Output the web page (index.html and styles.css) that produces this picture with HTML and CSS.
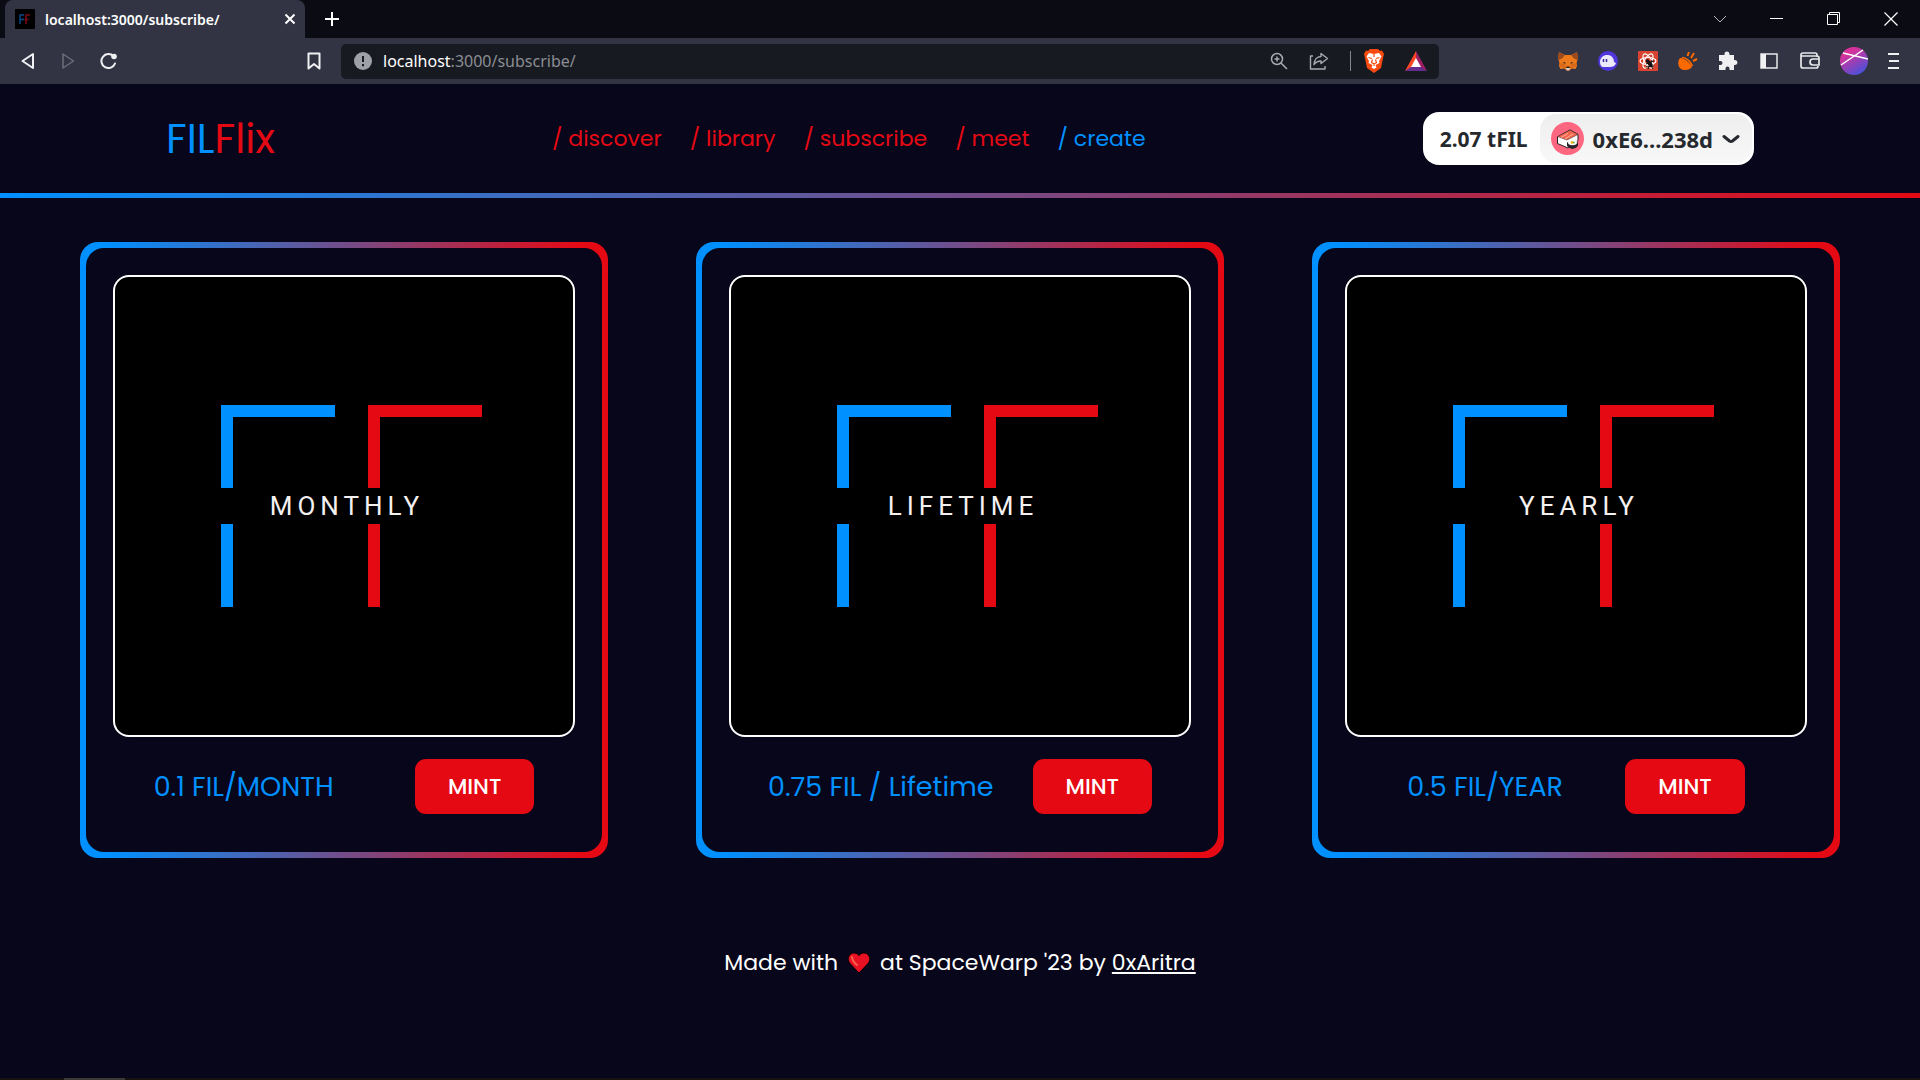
FILE: index.html
```html
<!DOCTYPE html>
<html lang="en">
<head>
  <meta charset="UTF-8">
  <meta name="viewport" content="width=device-width, initial-scale=1.0">
  <title>localhost:3000/subscribe/</title>
  <link rel="stylesheet" href="styles.css">
</head>
<body>
  <!-- Browser tabs -->
  <div class="tabbar">
    <div class="tab">
      <svg class="favicon" width="20" height="20" viewBox="0 0 20 20"><rect width="20" height="20" fill="#000"/><path d="M5 15V6h4M5 10.500h4" stroke="#06498a" stroke-width="1.500" fill="none"/><path d="M11 15V6h4M9.500 10.500h4" stroke="#7d0a14" stroke-width="1.500" fill="none"/></svg>
      <span class="tab-title">localhost:3000/subscribe/</span>
      <button class="icon-btn" aria-label="Close tab"><svg width="12" height="12" viewBox="0 0 12 12"><path d="M1.500 1.500l9 9M10.500 1.500l-9 9" stroke="#fff" stroke-width="2"/></svg></button>
    </div>
    <button class="icon-btn new-tab" aria-label="New tab"><svg width="16" height="16" viewBox="0 0 16 16"><path d="M8 1v14M1 8h14" stroke="#fff" stroke-width="2"/></svg></button>
    <div class="window-controls">
      <button class="icon-btn" aria-label="Search tabs"><svg width="14" height="14" viewBox="0 0 14 14"><path d="M1 4l6 6 6-6" stroke="#bbb" fill="none"/></svg></button>
      <button class="icon-btn" aria-label="Minimize"><svg width="14" height="14" viewBox="0 0 14 14"><path d="M0 6.500h13" stroke="#fff"/></svg></button>
      <button class="icon-btn" aria-label="Restore"><svg width="14" height="14" viewBox="0 0 14 14"><path d="M.5 2.500h10v10H.5zM2.500 2.500v-2h10v10h-2" stroke="#fff" fill="none"/></svg></button>
      <button class="icon-btn" aria-label="Close"><svg width="14" height="14" viewBox="0 0 14 14"><path d="M.5.5l13 13M13.500.5l-13 13" stroke="#fff" stroke-width="1.200"/></svg></button>
    </div>
  </div>

  <!-- Browser toolbar -->
  <div class="toolbar">
    <div class="nav-buttons">
      <button class="icon-btn" aria-label="Back"><svg width="16" height="18" viewBox="0 0 16 18"><path d="M13 2v14L2.500 9z" stroke="#f0f0f2" stroke-width="2" stroke-linejoin="round" fill="none"/></svg></button>
      <button class="icon-btn" aria-label="Forward"><svg width="16" height="18" viewBox="0 0 16 18"><path d="M3 2v14l10.500-7z" stroke="#6c6e79" stroke-width="1.500" stroke-linejoin="round" fill="none"/></svg></button>
      <button class="icon-btn" aria-label="Reload"><svg width="18" height="18" viewBox="0 0 18 18"><path d="M13.500 4.200A7 7 0 1 0 15 11.500" stroke="#f0f0f2" stroke-width="2" stroke-linecap="round" fill="none"/><circle cx="14" cy="4.500" r="2.800" fill="#f0f0f2"/></svg></button>
    </div>
    <button class="icon-btn" aria-label="Bookmark"><svg width="14" height="18" viewBox="0 0 14 18"><path d="M1.500 1.500h11v15L7 12l-5.500 4.500z" stroke="#f0f0f2" stroke-width="2" stroke-linejoin="round" fill="none"/></svg></button>
    <div class="address">
      <svg width="18" height="18" viewBox="0 0 18 18"><circle cx="9" cy="9" r="9" fill="#9fa1a9"/><path d="M9 4v6M9 12v2.200" stroke="#171a21" stroke-width="2"/></svg>
      <div class="url"><span class="host">localhost</span>:3000/subscribe/</div>
      <button class="icon-btn" aria-label="Zoom"><svg width="18" height="18" viewBox="0 0 18 18"><circle cx="7" cy="7" r="5.500" stroke="#aaabae" stroke-width="1.500" fill="none"/><path d="M11 11l6 6M7 4.500v5M4.500 7h5" stroke="#aaabae" stroke-width="1.500"/></svg></button>
      <button class="icon-btn" aria-label="Share"><svg width="20" height="18" viewBox="0 0 20 18"><path d="M4 4H1.500v13H16v-3M12 1.500l6.500 5-6.500 5V9c-3 0-5 1-7 3.500.3-4.500 3-8 7-8z" stroke="#aaabae" stroke-width="1.400" stroke-linejoin="round" fill="none"/></svg></button>
      <span class="divider"></span>
      <button class="icon-btn" aria-label="Brave Shields"><svg width="20" height="24" viewBox="0 0 20 24"><path d="M6 0h8l2 2 2-.5L20 5l-1 4-2 10-7 5-7-5L1 9 0 5l2-3.500L4 2z" fill="#fb4a0d"/><path d="M5 4l5 1 5-1 2.500 3.500L15 12l.5 2-4 2 1 2.500L10 20l-2.500-1.500 1-2.500-4-2 .5-2-2.500-4.500z" fill="#fff"/><path d="M4.500 8.500L8 9.500M15.500 8.500L12 9.500M10 5v3M8.500 10.500l-1 3 2.500 1.500 2.500-1.500-1-3M10 15v2" stroke="#fb4a0d" stroke-width="1.200" fill="none"/></svg></button>
      <button class="icon-btn" aria-label="Brave Rewards"><svg width="22" height="20" viewBox="0 0 22 20"><path d="M11 0L0 20l11-6z" fill="#ff4724"/><path d="M11 0l11 20-11-6z" fill="#9e1f63"/><path d="M0 20h22l-6-4H6z" fill="#662d91"/><path d="M11 7l5 9H6z" fill="#fff"/></svg></button>
    </div>
    <div class="extensions">
      <button class="icon-btn" aria-label="MetaMask"><svg width="20" height="20" viewBox="0 0 20 20"><path d="M1 1l6 3h6l6-3 1 6-1.500 5 .5 3-1.500 3-4-.5-2 2h-3l-2-2-4 .5L1 15l.5-3L0 7z" fill="#ef7a1c"/><path d="M1 1l6 3-3 3.500L.5 9 0 7zM19 1l-6 3 3 3.500L19.500 9 20 7z" fill="#9a4a1b"/><path d="M1.500 12L7 13l1.500 3-1.500 1.500L1 15zM18.500 12L13 13l-1.500 3 1.500 1.500 6-2.500z" fill="#d96a1a"/><path d="M7.500 17h5l-1.500 2.500H9z" fill="#d5c6b8"/><path d="M4.500 11l3 .5-.5 1.500zM15.500 11l-3 .5.5 1.500zM8.500 15.500h3l.5 1.500H8z" fill="#2d2825"/></svg></button>
      <button class="icon-btn" aria-label="Phantom"><svg width="20" height="20" viewBox="0 0 20 20"><circle cx="10" cy="10" r="10" fill="#5036dc"/><path d="M2 10.500C2.500 6 6 3.500 10 4c4 .5 6 3.500 6 7l2 1c-1 3-3 4-7 4H6c-3 0-4-2-4-5.500z" fill="#ece9fb"/><path d="M5.500 8v3M8.500 8v3" stroke="#3a2b9a" stroke-width="1.500"/></svg></button>
      <button class="icon-btn" aria-label="React Developer Tools"><svg width="20" height="20" viewBox="0 0 20 20"><rect width="20" height="20" rx="1" fill="#d9432f"/><g fill="none" stroke="#fff" stroke-width="1.200"><ellipse cx="10" cy="10" rx="8" ry="3.500"/><ellipse cx="10" cy="10" rx="8" ry="3.500" transform="rotate(60 10 10)"/><ellipse cx="10" cy="10" rx="8" ry="3.500" transform="rotate(120 10 10)"/></g><ellipse cx="12" cy="13" rx="2" ry="3.500" transform="rotate(-35 12 13)" fill="#111"/><circle cx="9.500" cy="10" r="1.800" fill="#111"/><path d="M8 13l8-3M8 16l8-1M14 9l-4 9M11 11l4 7" stroke="#111"/></svg></button>
      <button class="icon-btn" aria-label="Station"><svg width="20" height="20" viewBox="0 0 20 20"><path d="M2 7C-1 11 0 17 4 18.500c4 1.500 8 0 10-2.500-1-3-7-9-12-9z" fill="#ff6a00"/><path d="M4 6.500c4 0 9 4 10.500 8.500" stroke="#ff6a00" stroke-width="1.500" fill="none"/><path d="M9.500 5l1.500-4M13 7l3-5M15 10l4-2" stroke="#ff6a00" stroke-width="2"/></svg></button>
      <button class="icon-btn" aria-label="Extensions"><svg width="20" height="20" viewBox="0 0 20 20"><path d="M1 4h5.500V3a2.500 2.500 0 0 1 5 0v1H16v5h1a2.500 2.500 0 0 1 0 5h-1v5h-4.500v-1.500a2 2 0 0 0-4 0V19H1v-5h1.500a2 2 0 0 0 0-4H1z" fill="#f0f0f2"/></svg></button>
      <button class="icon-btn" aria-label="Sidebar"><svg width="22" height="16" viewBox="-2 0 22 16"><path d="M1 1h16v14H1z" fill="none" stroke="#e8e8ea" stroke-width="1.500"/><path d="M1 1h5v14H1z" fill="#f0f0f2"/></svg></button>
      <button class="icon-btn" aria-label="Wallet"><svg width="20" height="18" viewBox="0 0 20 18"><path d="M17 5V3q0-2-2-2H3Q1 1 1 3v11q0 2 2 2h13q2 0 2-2M1 4h16q2 0 2 2v2M19 7h-6a3 3 0 0 0 0 6h6z" fill="none" stroke="#e8e8ea" stroke-width="1.700"/></svg></button>
      <button class="icon-btn" aria-label="Profile"><svg width="28" height="28" viewBox="0 0 28 28"><defs><linearGradient id="profile" x1="0.200" y1="0" x2="0.800" y2="1"><stop offset="0.200" stop-color="#d6329a"/><stop offset="1" stop-color="#3e54e0"/></linearGradient></defs><circle cx="14" cy="14" r="14" fill="url(#profile)"/><path d="M1 18L23 3M3 6l25 6" stroke="#fff" stroke-width="1.500"/></svg></button>
      <button class="icon-btn" aria-label="Menu"><svg width="12" height="18" viewBox="0 0 12 18"><path d="M0 2h11M1 9h10M0 16h11" stroke="#f0f0f2" stroke-width="2"/></svg></button>
    </div>
  </div>

  <header class="header">
    <a class="logo" href="#">FIL<span class="red">Flix</span></a>
    <nav class="menu">
      <a href="#">/ discover</a>
      <a href="#">/ library</a>
      <a href="#">/ subscribe</a>
      <a href="#">/ meet</a>
      <a class="blue" href="#">/ create</a>
    </nav>
    <div class="wallet">
      <span class="balance">2.07 tFIL</span>
      <button class="account">
        <svg width="33" height="33" viewBox="0 0 33 33"><circle cx="16.500" cy="16.500" r="16.500" fill="#ff6680"/><path d="M6.500 15L19 8l8 4.500v6L17 26 6.500 21.500z" fill="#fff" stroke="#222" stroke-linejoin="round"/><path d="M6.500 14.500L19 8l8 4.500L16 18z" fill="#f5664f" stroke="#222" stroke-width=".5"/><path d="M10 15.500l7-4M14 17l8-5" stroke="#ffb09c"/><path d="M16 20.500q5.500-4 11 0V24q-5.500 6-11 0z" fill="#25252b"/><ellipse cx="21.500" cy="20.500" rx="4.500" ry="2.800" fill="#fff"/><circle cx="21" cy="20.500" r="1.400" fill="#f2bb28"/><circle cx="22.800" cy="20.500" r="1" fill="#6fa83a"/></svg>
        <span>0xE6...238d</span>
        <svg width="18" height="10" viewBox="0 0 18 10"><path d="M2 2.500l5.500 4.500q1.500 1 3 0L16 2.500" stroke="#25292e" stroke-width="3" stroke-linecap="round" fill="none"/></svg>
      </button>
    </div>
  </header>

  <!-- Subscription plans -->
  <main class="plans">
    <section class="card">
      <div class="card-inner">
        <svg class="art" viewBox="0 0 458 458" role="img" aria-label="Monthly pass">
          <path class="art-blue" d="M106 128h114v12h-102v71h-12zM106 247h12v83h-12z"/>
          <path class="art-red" d="M253 128h114v12h-102v71h-12zM253 247h12v83h-12z"/>
          <text x="232" y="238">MONTHLY</text>
        </svg>
        <div class="card-row around">
          <span class="price">0.1 FIL/MONTH</span>
          <button class="mint">MINT</button>
        </div>
      </div>
    </section>
    <section class="card">
      <div class="card-inner">
        <svg class="art" viewBox="0 0 458 458" role="img" aria-label="Lifetime pass">
          <path class="art-blue" d="M106 128h114v12h-102v71h-12zM106 247h12v83h-12z"/>
          <path class="art-red" d="M253 128h114v12h-102v71h-12zM253 247h12v83h-12z"/>
          <text x="232" y="238">LIFETIME</text>
        </svg>
        <div class="card-row">
          <span class="price">0.75 FIL / Lifetime</span>
          <button class="mint">MINT</button>
        </div>
      </div>
    </section>
    <section class="card">
      <div class="card-inner">
        <svg class="art" viewBox="0 0 458 458" role="img" aria-label="Yearly pass">
          <path class="art-blue" d="M106 128h114v12h-102v71h-12zM106 247h12v83h-12z"/>
          <path class="art-red" d="M253 128h114v12h-102v71h-12zM253 247h12v83h-12z"/>
          <text x="232" y="238">YEARLY</text>
        </svg>
        <div class="card-row">
          <span class="price">0.5 FIL/YEAR</span>
          <button class="mint">MINT</button>
        </div>
      </div>
    </section>
  </main>

  <footer class="footer">
    <span>Made with</span>
    <svg width="24" height="24" viewBox="0 0 24 24"><path d="M12 22L2.500 12C-1 7 3 1.500 7.500 2 10 2 12 4.500 12 4.500S14 2 16.500 2C21 1.500 25 7 21.500 12z" fill="#e81123" stroke="#000"/><path d="M5 6q0 4 5 8" stroke="#f7644b" stroke-width="2" stroke-linecap="round" fill="none"/></svg>
    <span>at SpaceWarp '23 by <a href="#">0xAritra</a></span>
  </footer>
  <div class="taskbar"><div class="taskbar-item"></div></div>
</body>
</html>
```
FILE: styles.css
```css
* {
  box-sizing: border-box;
}

body {
  margin: 0;
  min-height: 100vh;
  display: flex;
  flex-direction: column;
  background-color: #07061a;
  color: #fff;
  font-family: 'Poppins', 'Inter', sans-serif;
}

a {
  color: inherit;
  text-decoration: none;
}

button {
  font-family: inherit;
  border: none;
  cursor: pointer;
}

svg {
  display: block;
  flex-shrink: 0;
}

.icon-btn {
  display: flex;
  padding: 0;
  background: none;
}

/* Browser */
.tabbar {
  display: flex;
  align-items: center;
  height: 38px;
  padding: 0 5px;
  background: #0b0b14;
  font-family: 'Noto Sans', sans-serif;
}

.tab {
  display: flex;
  align-items: center;
  width: 300px;
  height: 38px;
  padding: 0 9px 0 10px;
  gap: 10px;
  background: #323443;
  border-radius: 8px 8px 0 0;
}

.tab-title {
  flex: 1;
  font-size: 14px;
  font-weight: 600;
}

.new-tab {
  margin-left: 19px;
}

.window-controls {
  display: flex;
  gap: 43px;
  margin-left: auto;
  margin-right: 17px;
}

.toolbar {
  display: flex;
  align-items: center;
  height: 46px;
  padding: 0 20px;
  background: #323443;
  font-family: 'Noto Sans', sans-serif;
}

.nav-buttons {
  display: flex;
  gap: 24px;
  margin-right: 189px;
}

.address {
  display: flex;
  align-items: center;
  flex: 0 1 1098px;
  height: 35px;
  margin-left: 20px;
  padding: 0 12px 0 13px;
  gap: 21px;
  background: #171a21;
  border-radius: 5px;
}

.url {
  flex: 1;
  margin-left: -10px;
  font-size: 16px;
  color: #8b8d93;
}

.host {
  color: #fff;
}

.divider {
  width: 1px;
  height: 20px;
  background: #85878d;
}

.address .divider {
  margin-right: -8px;
}

.extensions {
  display: flex;
  align-items: center;
  gap: 20px;
  margin-left: auto;
}

/* Site header */
.header {
  display: flex;
  align-items: center;
  justify-content: space-between;
  height: 114px;
  padding: 0 166px;
  border-bottom: 5px solid;
  border-image: linear-gradient(90deg, #0090ff, #e50914) 1;
}

.logo {
  font-size: 41px;
  color: #0090ff;
}

.red {
  color: #e50914;
}

.menu {
  display: flex;
  gap: 28px;
  font-size: 22px;
  color: #e50914;
}

.menu .blue {
  color: #0090ff;
}

.wallet {
  display: flex;
  align-items: center;
  padding: 2px;
  background: #fff;
  border-radius: 16px;
  color: #25292e;
  font-family: 'Noto Sans', sans-serif;
  font-size: 21px;
  font-weight: 700;
}

.balance {
  padding: 0 12px 0 15px;
}

.account {
  display: flex;
  align-items: center;
  gap: 9px;
  height: 49px;
  padding: 0 12px 0 11px;
  background: linear-gradient(#eee, #f8f8f8);
  border-radius: 16px;
  color: inherit;
  font-size: 22px;
  font-weight: 700;
}

/* Plans */
.plans {
  display: grid;
  grid-template-columns: repeat(3, 1fr);
  gap: 88px;
  padding: 44px 80px 0;
}

.card {
  padding: 6px;
  background: linear-gradient(90deg, #0090ff 5%, #e50914 95%);
  border-radius: 18px;
}

.card-inner {
  padding: 27px 27px 38px;
  background: #07061a;
  border-radius: 18px;
}

.art {
  width: 100%;
  background: #000;
  border: 2px solid #fff;
  border-radius: 16px;
}

.art-blue {
  fill: #0090ff;
}

.art-red {
  fill: #e50914;
}

.art text {
  fill: #f5f0f0;
  font-family: 'Roboto', sans-serif;
  font-size: 26px;
  letter-spacing: 5px;
  text-anchor: middle;
}

.card-row {
  display: flex;
  align-items: center;
  justify-content: space-evenly;
  margin-top: 22px;
}

.around {
  justify-content: space-around;
}

.price {
  font-size: 27px;
  line-height: 40px;
  color: #0090ff;
}

.mint {
  height: 55px;
  padding: 0 33px;
  background: #e50914;
  border-radius: 11px;
  color: #fff;
  font-size: 22px;
  font-weight: 500;
}

/* Footer */
.footer {
  display: flex;
  align-items: center;
  justify-content: center;
  gap: 9px;
  margin-top: 88px;
  font-size: 22px;
  line-height: 34px;
}

.footer a {
  text-decoration: underline;
}

.taskbar {
  height: 2px;
  margin-top: auto;
  padding-left: 64px;
  background: #17120f;
}

.taskbar-item {
  width: 61px;
  height: 2px;
  background: #3b3838;
}
```
